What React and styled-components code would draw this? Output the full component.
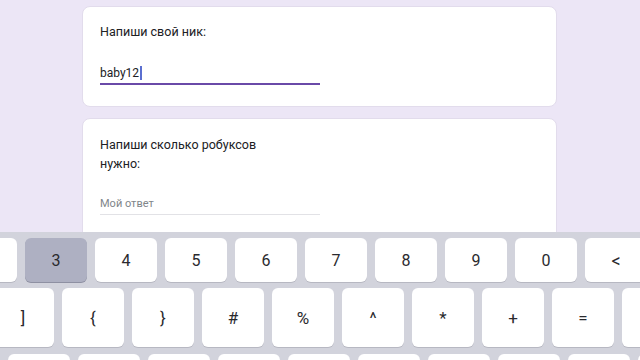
import React from "react";
import styled, { createGlobalStyle } from "styled-components";

const Global = createGlobalStyle`
  html, body { margin: 0; padding: 0; }
  body { width: 640px; height: 360px; overflow: hidden; background: #ece6f6; font-family: Roboto, "Noto Sans", sans-serif; }
`;

const Page = styled.div`
  width: 640px;
  height: 360px;
  display: flex;
  flex-direction: column;
  overflow: hidden;
`;

const FormArea = styled.div`
  height: 232px;
  flex: none;
  overflow: hidden;
  background: #ece6f6;
  display: flex;
  flex-direction: column;
  gap: 11px;
  padding: 6px 0 0 82px;
  box-sizing: border-box;
`;

const Card = styled.div`
  width: 475px;
  flex: none;
  height: ${(p) => p.$h}px;
  background: #ffffff;
  border-radius: 8px;
  border: 1px solid #e2dcec;
  box-sizing: border-box;
  padding: ${(p) => p.$pt}px 18px 0 17px;
  display: flex;
  flex-direction: column;
`;

const Question = styled.div`
  font-size: 12.5px;
  line-height: 18.5px;
  color: #202124;
  width: 165px;
`;

const Field = styled.div`
  width: 220px;
  margin-top: ${(p) => p.$mt}px;
  border-bottom: ${(p) => (p.$active ? "2px solid #6a4aa8" : "1px solid #e2e2e6")};
  padding-bottom: ${(p) => p.$pb}px;
  font-size: ${(p) => (p.$placeholder ? 11 : 12)}px;
  line-height: 14px;
  color: ${(p) => (p.$placeholder ? "#80858a" : "#202124")};
  display: flex;
  align-items: center;
`;

const Caret = styled.span`
  display: inline-block;
  width: 1.5px;
  height: 14px;
  background: #5b6fd0;
  margin-left: 1px;
`;

const Keyboard = styled.div`
  flex: 1;
  background: #d2d3dc;
  padding-top: 6px;
  display: flex;
  flex-direction: column;
  gap: 6px;
  overflow: hidden;
`;

const Row = styled.div`
  display: flex;
  gap: 8px;
  margin-left: ${(p) => p.$offset}px;
  height: ${(p) => p.$h}px;
  flex: none;
  margin-top: ${(p) => p.$mt || 0}px;
`;

const Key = styled.div`
  flex: none;
  width: 62px;
  height: 100%;
  border-radius: 6px;
  background: ${(p) => (p.$pressed ? "#aeb0c2" : "#ffffff")};
  box-shadow: 0 1px 0 ${(p) => (p.$pressed ? "#8e90a2" : "#b7b8c2")};
  display: flex;
  align-items: center;
  justify-content: center;
  font-family: Roboto, "Noto Sans", sans-serif;
  font-size: ${(p) => p.$fs || 16}px;
  color: #2a2a2e;
`;

const row1 = ["", "3", "4", "5", "6", "7", "8", "9", "0", "<"];
const row2 = ["]", "{", "}", "#", "%", "^", "*", "+", "=", ""];
const row3 = ["", "", "", "", "", "", "", "", "", ""];

export default function App() {
  return (
    <Page>
      <Global />
      <FormArea>
        <Card $h={101} $pt={16}>
          <Question>Напиши свой ник:</Question>
          <Field $mt={24} $pb={3} $active>
            baby12
            <Caret />
          </Field>
        </Card>
        <Card $h={140} $pt={17}>
          <Question>Напиши сколько робуксов нужно:</Question>
          <Field $mt={24} $pb={3} $placeholder>
            Мой ответ
          </Field>
        </Card>
      </FormArea>
      <Keyboard>
        <Row $offset={-45} $h={44}>
          {row1.map((k, i) => (
            <Key key={i} $pressed={k === "3"} $fs={k === "<" ? 18 : 16}>
              {k}
            </Key>
          ))}
        </Row>
        <Row $offset={-8} $h={59}>
          {row2.map((k, i) => (
            <Key key={i} $fs={17}>
              {k}
            </Key>
          ))}
        </Row>
        <Row $offset={8} $h={40} $mt={1}>
          {row3.map((k, i) => (
            <Key key={i} />
          ))}
        </Row>
      </Keyboard>
    </Page>
  );
}
